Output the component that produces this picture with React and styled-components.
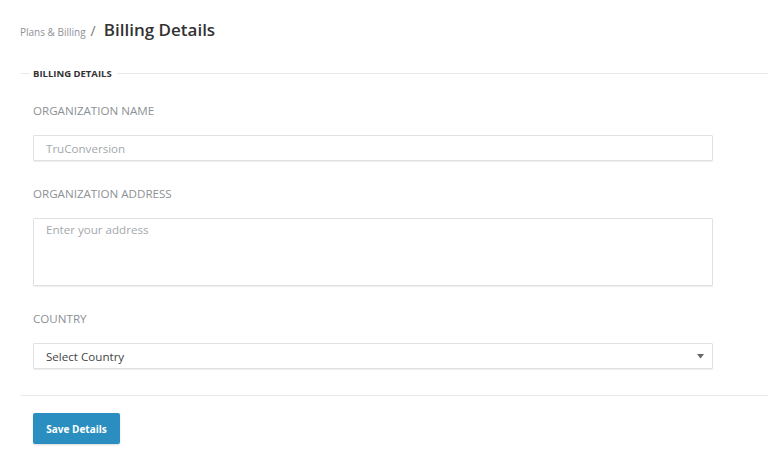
import React from 'react';
import styled, { createGlobalStyle } from 'styled-components';

const GlobalStyle = createGlobalStyle`
  html, body {
    margin: 0;
    padding: 0;
    background: #ffffff;
  }
  body {
    font-family: "Open Sans", "Liberation Sans", sans-serif;
    color: #333;
  }
  * {
    box-sizing: border-box;
  }
`;

const App = () => {
  return (
    <>
      <GlobalStyle />
      <Page>
        <Breadcrumb>
          <Crumb>Plans &amp; Billing</Crumb>
          <Slash>/</Slash>
          <PageTitle>Billing Details</PageTitle>
        </Breadcrumb>

        <Section>
          <Legend>
            <LegendLine $short />
            <LegendText>Billing Details</LegendText>
            <LegendLine />
          </Legend>

          <FormBody>
            <Field>
              <Label>Organization Name</Label>
              <Input type="text" placeholder="TruConversion" />
            </Field>

            <Field>
              <Label>Organization Address</Label>
              <TextArea placeholder="Enter your address" />
            </Field>

            <Field $last>
              <Label>Country</Label>
              <SelectBox>
                <span>Select Country</span>
                <svg width="7" height="5" viewBox="0 0 7 5">
                  <polygon points="0,0 7,0 3.5,4.5" fill="#666" />
                </svg>
              </SelectBox>
            </Field>
          </FormBody>

          <Divider />

          <Actions>
            <SaveButton type="button">Save Details</SaveButton>
          </Actions>
        </Section>
      </Page>
    </>
  );
};

const Page = styled.div`
  width: 768px;
  min-height: 464px;
  padding: 18px 0 0 20px;
`;

const Breadcrumb = styled.div`
  display: flex;
  align-items: baseline;
  height: 24px;
  line-height: 24px;
`;

const Crumb = styled.span`
  font-size: 10px;
  color: #8d9196;
`;

const Slash = styled.span`
  font-size: 14px;
  color: #777;
  margin: 0 8px 0 5px;
`;

const PageTitle = styled.h1`
  margin: 0;
  font-size: 17px;
  font-weight: 600;
  color: #333;
`;

const Section = styled.div`
  margin-top: 24px;
`;

const Legend = styled.div`
  display: flex;
  align-items: center;
  height: 14px;
`;

const LegendLine = styled.div`
  height: 1px;
  background: #e8eaec;
  ${props => (props.$short ? 'width: 10px;' : 'flex: 1;')}
`;

const LegendText = styled.span`
  font-size: 9.5px;
  font-weight: 700;
  text-transform: uppercase;
  color: #333;
  padding: 0 5px 0 3px;
`;

const FormBody = styled.div`
  padding: 23px 55px 0 13px;
`;

const Field = styled.div`
  display: flex;
  flex-direction: column;
  margin-bottom: ${props => (props.$last ? '26px' : '25px')};
`;

const Label = styled.label`
  font-size: 11.6px;
  line-height: 16px;
  text-transform: uppercase;
  color: #8d9196;
  margin-bottom: 16px;
`;

const fieldBase = `
  width: 100%;
  border: 1px solid #dfe2e5;
  border-radius: 1px;
  box-shadow: 0 1px 1px rgba(0, 0, 0, 0.07);
  background: #fff;
  font-family: "Open Sans", "Liberation Sans", sans-serif;
  font-size: 11.6px;
  color: #444;
  outline: none;
`;

const Input = styled.input`
  ${fieldBase}
  height: 26px;
  padding: 0 12px;

  &::placeholder {
    color: #a3a7ab;
  }
`;

const TextArea = styled.textarea`
  ${fieldBase}
  height: 68px;
  padding: 3px 12px;
  resize: none;

  &::placeholder {
    color: #a3a7ab;
  }
`;

const SelectBox = styled.div`
  ${fieldBase}
  height: 26px;
  padding: 0 8px 0 12px;
  display: flex;
  align-items: center;
  justify-content: space-between;
  color: #444;
`;

const Divider = styled.div`
  height: 1px;
  background: #e8eaec;
`;

const Actions = styled.div`
  padding: 17px 0 0 13px;
`;

const SaveButton = styled.button`
  height: 31px;
  width: 87px;
  border: none;
  border-radius: 2px;
  background: #2a8fc0;
  color: #fff;
  font-family: "Open Sans", "Liberation Sans", sans-serif;
  font-size: 10px;
  font-weight: 700;
  box-shadow: 0 1px 2px rgba(0, 0, 0, 0.15);
  cursor: pointer;
`;

export default App;
